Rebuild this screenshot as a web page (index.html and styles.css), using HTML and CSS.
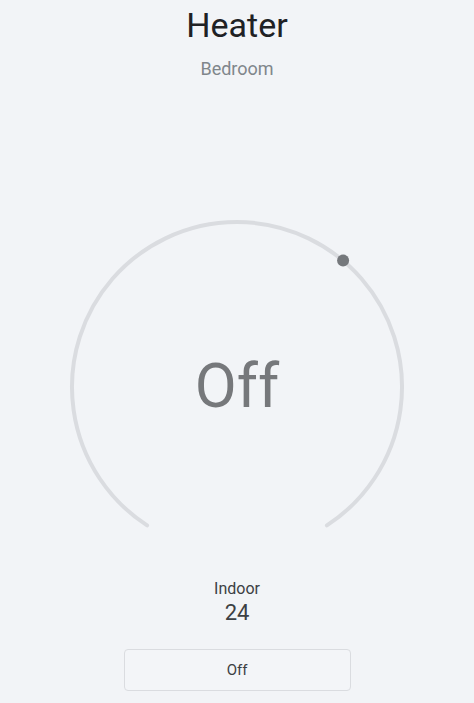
FILE: index.html
```html
<!DOCTYPE html>
<html>
<head>
<meta charset="utf-8">
<link rel="stylesheet" href="styles.css">
</head>
<body>
<main class="card">
  <h1 class="title">Heater</h1>
  <div class="room">Bedroom</div>
  <div class="dial">
    <svg class="dial-svg" width="340" height="320" viewBox="0 0 340 320">
      <path d="M 80.1 308.4 A 165 165 0 1 1 259.9 308.4" fill="none" stroke="#dadce0" stroke-width="4" stroke-linecap="round"/>
      <circle cx="276.1" cy="43.6" r="6" fill="#75787c"/>
    </svg>
    <div class="dial-label">Off</div>
  </div>
  <div class="indoor">
    <div class="indoor-label">Indoor</div>
    <div class="indoor-value">24</div>
  </div>
  <button class="mode-btn">Off</button>
</main>
</body>
</html>
```
FILE: styles.css
```css
html, body {
  margin: 0;
  padding: 0;
  background: #f2f4f7;
}
body {
  font-family: Roboto, "Open Sans", sans-serif;
  width: 474px;
  height: 703px;
  overflow: hidden;
}
.card {
  display: flex;
  flex-direction: column;
  align-items: center;
}
.title {
  margin: 5px 0 0;
  font-size: 34px;
  line-height: 40px;
  font-weight: 400;
  color: #202124;
}
.room {
  margin-top: 13px;
  font-size: 18px;
  line-height: 22px;
  color: #80868b;
}
.dial {
  margin-top: 137px;
  display: grid;
  place-items: center;
}
.dial-svg {
  grid-area: 1 / 1;
  display: block;
}
.dial-label {
  grid-area: 1 / 1;
  align-self: start;
  margin-top: 137px;
  font-size: 61px;
  line-height: 64px;
  color: #76787b;
}
.indoor {
  margin-top: 42px;
  display: flex;
  flex-direction: column;
  align-items: center;
}
.indoor-label {
  font-size: 16px;
  line-height: 20px;
  color: #3c4043;
}
.indoor-value {
  margin-top: 1px;
  font-size: 22px;
  line-height: 26px;
  color: #3c4043;
}
.mode-btn {
  margin-top: 23px;
  width: 227px;
  height: 42px;
  border: 1px solid #dadce0;
  border-radius: 4px;
  background: #f3f5f8;
  font-family: Roboto, "Open Sans", sans-serif;
  font-size: 15px;
  color: #3c4043;
}
```
